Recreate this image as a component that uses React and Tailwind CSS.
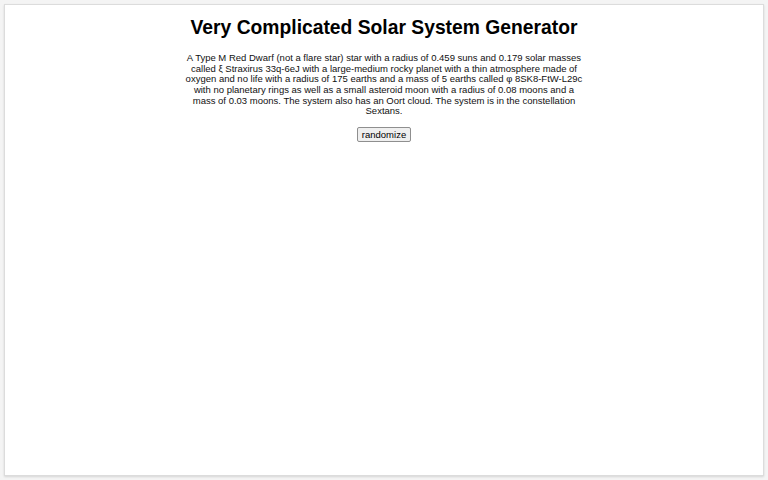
export default function App() {
    return (
        <div className="w-[768px] h-[480px] bg-[#f4f4f4] p-[4px] font-['Liberation_Sans',Arial,sans-serif]">
            <div className="h-full bg-white border border-[#dcdcdc] shadow-[0_1px_2px_rgba(0,0,0,0.12)] flex flex-col items-center">
                <h1 className="mt-[11px] text-[19.3px] leading-[24px] font-bold text-black">Very Complicated Solar System Generator</h1>
                <p className="mt-[13px] w-[404px] text-center text-[9.5px] leading-[10.65px] text-[#111]">
                    A Type M Red Dwarf (not a flare star) star with a radius of 0.459 suns and 0.179 solar masses called ξ Straxirus 33q-6eJ with a large-medium rocky planet with a thin atmosphere made of oxygen and no life with a radius of 175 earths and a mass of 5 earths called φ 8SK8-FtW-L29c with no planetary rings as well as a small asteroid moon with a radius of 0.08 moons and a mass of 0.03 moons. The system also has an Oort cloud. The system is in the constellation Sextans.
                </p>
                <button type="button" className="mt-[10px] px-[4px] h-[15px] text-[9.5px] leading-[13px] text-black bg-[#efefef] border border-[#8f8f8f] rounded-[2px]">randomize</button>
            </div>
        </div>
    );
}
